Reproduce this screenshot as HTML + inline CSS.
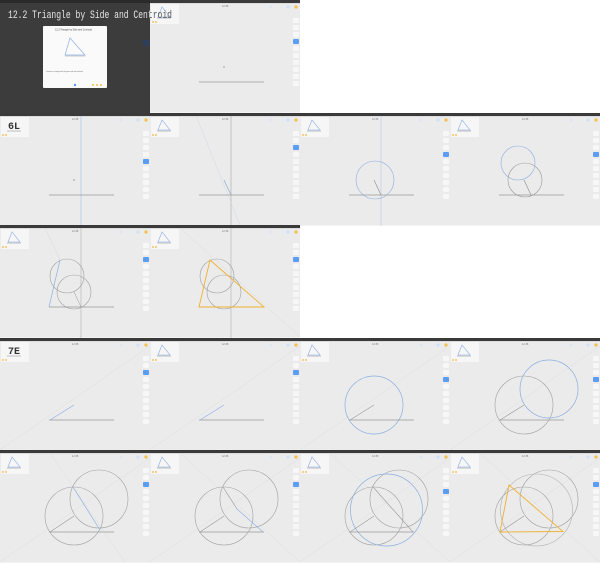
<!DOCTYPE html>
<html><head><meta charset="utf-8"><style>
html,body{margin:0;padding:0;background:#fff;width:600px;height:563px;overflow:hidden}
svg{display:block}
</style></head><body>
<svg width="600" height="563" viewBox="0 0 600 563" xmlns="http://www.w3.org/2000/svg" font-family="Liberation Sans, sans-serif">
<defs>
<clipPath id="cl"><rect x="0" y="0" width="150" height="30"/></clipPath>
<clipPath id="cr"><rect x="150" y="0" width="100" height="30"/></clipPath>
<g id="chrome">
  <rect x="0" y="0" width="150" height="112.6" fill="#ebebeb"/>
  <rect x="0" y="0" width="150" height="3" fill="#3a3a3a"/>
  <rect x="0" y="3" width="150" height="1" fill="#dcdcdc"/>
  <rect x="1" y="4" width="28" height="20" fill="#f6f6f6"/>
  <circle cx="3" cy="22" r="0.9" fill="#f3b43c"/><circle cx="6" cy="22" r="0.9" fill="#f3b43c"/>
  <text x="72" y="7" font-size="2.5" fill="#777">12:38</text>
  <circle cx="121" cy="7" r="1.6" fill="#dfe6f2"/><circle cx="138" cy="7" r="1.6" fill="#cfe0fb"/><circle cx="146" cy="7" r="1.6" fill="#f3c04a"/>
  <g fill="#f7f7f7">
    <rect x="143" y="18" width="6" height="5" rx="1"/><rect x="143" y="25" width="6" height="5" rx="1"/>
    <rect x="143" y="32" width="6" height="5" rx="1"/><rect x="143" y="39" width="6" height="5" rx="1"/>
    <rect x="143" y="46" width="6" height="5" rx="1"/><rect x="143" y="53" width="6" height="5" rx="1"/>
    <rect x="143" y="60" width="6" height="5" rx="1"/><rect x="143" y="67" width="6" height="5" rx="1"/>
    <rect x="143" y="74" width="6" height="5" rx="1"/><rect x="143" y="81" width="6" height="5" rx="1"/>
  </g>
</g>
<g id="minitri"><path d="M12 7 L8 17 L20 17 Z" fill="none" stroke="#8aaee6" stroke-width="0.6"/><line x1="7" y1="18" x2="21" y2="18" stroke="#999" stroke-width="0.6"/></g>
</defs>

<rect x="0" y="0" width="150" height="113" fill="#3c3c3c"/>
<rect x="0" y="0" width="150" height="3" fill="#2a2a2a"/>
<rect x="43" y="26" width="64" height="62" fill="#fafafa" rx="1"/>
<text x="55" y="30.5" font-size="2.4" fill="#444">12.2 Triangle by Side and Centroid</text>
<path d="M70 38 L65 55 L85 55 Z" fill="none" stroke="#8fb0e6" stroke-width="0.7"/>
<line x1="65" y1="56" x2="85" y2="56" stroke="#999" stroke-width="0.6"/>
<text x="46" y="72" font-size="1.6" fill="#666">Construct a triangle with the given side and centroid.</text>
<circle cx="75" cy="85" r="1.2" fill="#5b9cf5"/>
<circle cx="93" cy="85" r="1" fill="#f3c04a"/><circle cx="97" cy="85" r="1" fill="#f3c04a"/><circle cx="101" cy="85" r="1" fill="#f3c04a"/>
<rect x="143" y="40" width="6" height="6" fill="#2e3f5c"/>

<g transform="translate(150,0)"><use href="#chrome"/><use href="#minitri"/>
<rect x="143" y="39" width="6" height="5" rx="1" fill="#5b9cf5"/>
<line x1="49" y1="82" x2="114" y2="82" stroke="#9a9a9a" stroke-width="0.8"/><circle cx="74" cy="67" r="0.6" fill="#666"/></g>
<g clip-path="url(#cl)"><text x="8" y="18" style="font-family:'Liberation Mono',monospace;font-size:11px" textLength="164" lengthAdjust="spacingAndGlyphs" fill="#e8e8e8">12.2 Triangle by Side and Centroid</text></g>
<g clip-path="url(#cr)"><text x="8" y="18" style="font-family:'Liberation Mono',monospace;font-size:11px" textLength="164" lengthAdjust="spacingAndGlyphs" fill="#555">12.2 Triangle by Side and Centroid</text></g>

<g transform="translate(0,113)"><use href="#chrome"/>
<text x="8" y="16" style="font-family:'Liberation Mono',monospace;font-size:10px;font-weight:bold" fill="#333">6L</text>
<line x1="7" y1="18" x2="21" y2="18" stroke="#999" stroke-width="0.6"/>
<rect x="143" y="46" width="6" height="5" rx="1" fill="#5b9cf5"/>
<line x1="81" y1="3" x2="81" y2="113" stroke="#a9c4ec" stroke-width="0.7"/>
<line x1="49" y1="82" x2="114" y2="82" stroke="#9a9a9a" stroke-width="0.8"/><circle cx="74" cy="67" r="0.6" fill="#666"/></g>
<g transform="translate(150,113)"><use href="#chrome"/><use href="#minitri"/>
<rect x="143" y="32" width="6" height="5" rx="1" fill="#5b9cf5"/>
<line x1="81" y1="3" x2="81" y2="113" stroke="#a8a8a8" stroke-width="0.6"/>
<line x1="47" y1="5" x2="90" y2="112" stroke="#cfd8e6" stroke-width="0.5"/>
<line x1="74" y1="67" x2="81" y2="82" stroke="#8aa8d8" stroke-width="0.7"/>
<line x1="49" y1="82" x2="114" y2="82" stroke="#9a9a9a" stroke-width="0.8"/></g>
<g transform="translate(300,113)"><use href="#chrome"/><use href="#minitri"/>
<rect x="143" y="39" width="6" height="5" rx="1" fill="#5b9cf5"/>
<line x1="81" y1="3" x2="81" y2="113" stroke="#b8c8e0" stroke-width="0.6"/>
<circle cx="75" cy="67" r="19" fill="none" stroke="#8aaedf" stroke-width="0.6"/>
<line x1="74" y1="67" x2="81" y2="82" stroke="#888" stroke-width="0.6"/>
<line x1="49" y1="82" x2="114" y2="82" stroke="#9a9a9a" stroke-width="0.8"/></g>
<g transform="translate(450,113)"><use href="#chrome"/><use href="#minitri"/>
<rect x="143" y="39" width="6" height="5" rx="1" fill="#5b9cf5"/>
<circle cx="68" cy="50" r="17" fill="none" stroke="#8aaedf" stroke-width="0.6"/>
<circle cx="75" cy="67" r="17" fill="none" stroke="#999" stroke-width="0.6"/>
<line x1="74" y1="67" x2="81" y2="82" stroke="#888" stroke-width="0.6"/>
<line x1="49" y1="82" x2="114" y2="82" stroke="#9a9a9a" stroke-width="0.8"/></g>

<g transform="translate(0,225)"><use href="#chrome"/><use href="#minitri"/>
<rect x="143" y="32" width="6" height="5" rx="1" fill="#5b9cf5"/>
<line x1="81" y1="3" x2="81" y2="113" stroke="#b0b0b0" stroke-width="0.6"/>
<line x1="45" y1="3" x2="60" y2="35" stroke="#d4d4d4" stroke-width="0.4"/>
<circle cx="67" cy="51" r="17" fill="none" stroke="#a0a0a0" stroke-width="0.6"/>
<circle cx="74" cy="67" r="17" fill="none" stroke="#a0a0a0" stroke-width="0.6"/>
<line x1="60" y1="35" x2="49" y2="82" stroke="#8fb0e6" stroke-width="0.7"/>
<line x1="74" y1="67" x2="81" y2="82" stroke="#999" stroke-width="0.5"/>
<line x1="49" y1="82" x2="114" y2="82" stroke="#9a9a9a" stroke-width="0.8"/></g>
<g transform="translate(150,225)"><use href="#chrome"/><use href="#minitri"/>
<rect x="143" y="32" width="6" height="5" rx="1" fill="#5b9cf5"/>
<line x1="81" y1="3" x2="81" y2="113" stroke="#b0b0b0" stroke-width="0.6"/>
<line x1="30" y1="3" x2="150" y2="112" stroke="#d8d8d8" stroke-width="0.4"/>
<circle cx="67" cy="51" r="17" fill="none" stroke="#a0a0a0" stroke-width="0.6"/>
<circle cx="74" cy="67" r="17" fill="none" stroke="#a0a0a0" stroke-width="0.6"/>
<path d="M60 35 L49 82 L114 82 Z" fill="none" stroke="#f0b030" stroke-width="0.9"/></g>

<g transform="translate(0,338)"><use href="#chrome"/>
<text x="8" y="16" style="font-family:'Liberation Mono',monospace;font-size:10px;font-weight:bold" fill="#333">7E</text>
<line x1="7" y1="18" x2="21" y2="18" stroke="#999" stroke-width="0.6"/>
<rect x="143" y="32" width="6" height="5" rx="1" fill="#5b9cf5"/>
<line x1="0" y1="112" x2="150" y2="8" stroke="#dadada" stroke-width="0.4"/>
<line x1="49" y1="82" x2="114" y2="82" stroke="#9a9a9a" stroke-width="0.8"/>
<line x1="50" y1="82" x2="74" y2="67" stroke="#8fb0e6" stroke-width="0.7"/></g>
<g transform="translate(150,338)"><use href="#chrome"/><use href="#minitri"/>
<rect x="143" y="32" width="6" height="5" rx="1" fill="#5b9cf5"/>
<line x1="0" y1="112" x2="150" y2="8" stroke="#dadada" stroke-width="0.4"/>
<line x1="49" y1="82" x2="114" y2="82" stroke="#9a9a9a" stroke-width="0.8"/>
<line x1="50" y1="82" x2="74" y2="67" stroke="#8fb0e6" stroke-width="0.7"/></g>
<g transform="translate(300,338)"><use href="#chrome"/><use href="#minitri"/>
<rect x="143" y="39" width="6" height="5" rx="1" fill="#5b9cf5"/>
<line x1="0" y1="112" x2="150" y2="8" stroke="#dadada" stroke-width="0.4"/>
<circle cx="74" cy="67" r="29" fill="none" stroke="#8aaedf" stroke-width="0.7"/>
<line x1="49" y1="82" x2="114" y2="82" stroke="#9a9a9a" stroke-width="0.8"/>
<line x1="50" y1="82" x2="74" y2="67" stroke="#999" stroke-width="0.6"/></g>
<g transform="translate(450,338)"><use href="#chrome"/><use href="#minitri"/>
<rect x="143" y="39" width="6" height="5" rx="1" fill="#5b9cf5"/>
<line x1="0" y1="112" x2="150" y2="8" stroke="#dadada" stroke-width="0.4"/>
<circle cx="74" cy="67" r="29" fill="none" stroke="#a0a0a0" stroke-width="0.6"/>
<circle cx="99" cy="51" r="29" fill="none" stroke="#8aaedf" stroke-width="0.7"/>
<line x1="49" y1="82" x2="114" y2="82" stroke="#9a9a9a" stroke-width="0.8"/>
<line x1="50" y1="82" x2="74" y2="67" stroke="#999" stroke-width="0.6"/></g>

<g transform="translate(0,450)"><use href="#chrome"/><use href="#minitri"/>
<rect x="143" y="32" width="6" height="5" rx="1" fill="#5b9cf5"/>
<line x1="0" y1="112" x2="150" y2="8" stroke="#dadada" stroke-width="0.4"/>
<line x1="50" y1="3" x2="125" y2="112" stroke="#dadada" stroke-width="0.4"/>
<circle cx="74" cy="66" r="29" fill="none" stroke="#a0a0a0" stroke-width="0.6"/>
<circle cx="99" cy="49" r="29" fill="none" stroke="#a0a0a0" stroke-width="0.6"/>
<line x1="73" y1="37" x2="100" y2="80" stroke="#8fb0e6" stroke-width="0.7"/>
<line x1="49" y1="82" x2="114" y2="82" stroke="#9a9a9a" stroke-width="0.8"/>
<line x1="50" y1="82" x2="74" y2="66" stroke="#999" stroke-width="0.6"/></g>
<g transform="translate(150,450)"><use href="#chrome"/><use href="#minitri"/>
<rect x="143" y="32" width="6" height="5" rx="1" fill="#5b9cf5"/>
<line x1="0" y1="112" x2="150" y2="8" stroke="#dadada" stroke-width="0.4"/>
<line x1="30" y1="3" x2="150" y2="112" stroke="#dadada" stroke-width="0.4"/>
<circle cx="74" cy="66" r="29" fill="none" stroke="#a0a0a0" stroke-width="0.6"/>
<circle cx="99" cy="49" r="29" fill="none" stroke="#a0a0a0" stroke-width="0.6"/>
<line x1="73" y1="37" x2="87" y2="59" stroke="#999" stroke-width="0.6"/>
<line x1="87" y1="59" x2="113" y2="82" stroke="#8fb0e6" stroke-width="0.7"/>
<line x1="49" y1="82" x2="114" y2="82" stroke="#9a9a9a" stroke-width="0.8"/>
<line x1="50" y1="82" x2="74" y2="66" stroke="#999" stroke-width="0.6"/></g>
<g transform="translate(300,450)"><use href="#chrome"/><use href="#minitri"/>
<rect x="143" y="39" width="6" height="5" rx="1" fill="#5b9cf5"/>
<line x1="0" y1="112" x2="150" y2="8" stroke="#dadada" stroke-width="0.4"/>
<line x1="30" y1="3" x2="150" y2="112" stroke="#dadada" stroke-width="0.4"/>
<circle cx="74" cy="66" r="29" fill="none" stroke="#a0a0a0" stroke-width="0.6"/>
<circle cx="99" cy="49" r="29" fill="none" stroke="#a0a0a0" stroke-width="0.6"/>
<circle cx="86.5" cy="60" r="36" fill="none" stroke="#8aaedf" stroke-width="0.7"/>
<line x1="73" y1="37" x2="113" y2="82" stroke="#999" stroke-width="0.6"/>
<line x1="49" y1="82" x2="114" y2="82" stroke="#9a9a9a" stroke-width="0.8"/>
<line x1="50" y1="82" x2="74" y2="66" stroke="#999" stroke-width="0.6"/></g>
<g transform="translate(450,450)"><use href="#chrome"/><use href="#minitri"/>
<rect x="143" y="32" width="6" height="5" rx="1" fill="#5b9cf5"/>
<line x1="0" y1="112" x2="150" y2="8" stroke="#dadada" stroke-width="0.4"/>
<line x1="30" y1="3" x2="150" y2="112" stroke="#dadada" stroke-width="0.4"/>
<circle cx="74" cy="66" r="29" fill="none" stroke="#a0a0a0" stroke-width="0.6"/>
<circle cx="99" cy="49" r="29" fill="none" stroke="#a0a0a0" stroke-width="0.6"/>
<circle cx="86.5" cy="60" r="36" fill="none" stroke="#b0b0b0" stroke-width="0.6"/>
<line x1="50" y1="82" x2="74" y2="66" stroke="#999" stroke-width="0.6"/>
<path d="M59 35 L50 82 L113 81.5 Z" fill="none" stroke="#f0b030" stroke-width="0.9"/></g>
</svg>
</body></html>
